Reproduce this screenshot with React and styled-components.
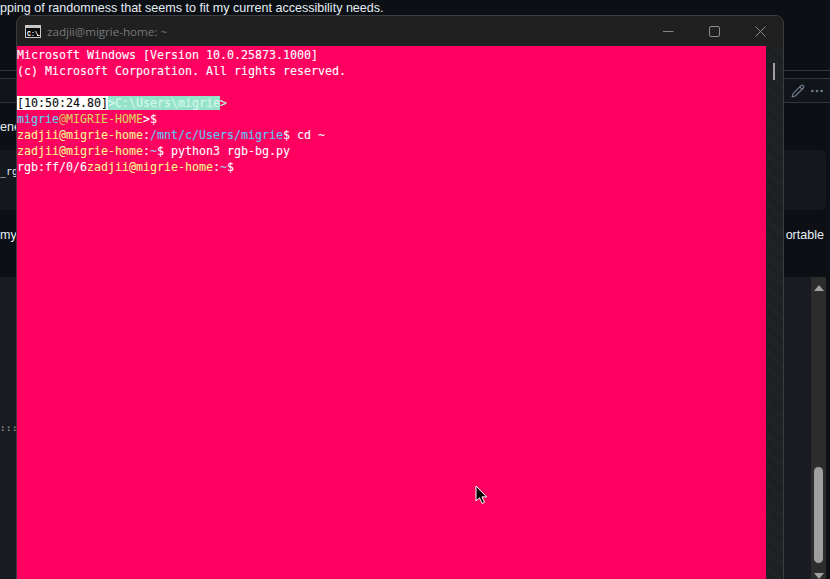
import React from "react";
import styled, { createGlobalStyle } from "styled-components";
import { Pencil, Ellipsis } from "lucide-react";

const Global = createGlobalStyle`
  html, body { margin: 0; padding: 0; background: #0c1015; }
`;

const App = () => {
  return (
    <>
      <Global />
      <Page>
        <IntroLine>pping of randomness that seems to fit my current accessibility needs.</IntroLine>
        <FileHeader>
          <Toolbar>
            <Pencil size={14} />
            <Ellipsis size={16} />
          </Toolbar>
        </FileHeader>
        <ParaLine>ene</ParaLine>
        <SnippetBlock>
          <SnippetText>_rg</SnippetText>
        </SnippetBlock>
        <ParaLine2>
          <span>my</span>
          <span>ortable</span>
        </ParaLine2>
        <CodeBlock>
          <CodeArea>
            <Dots>:::</Dots>
          </CodeArea>
          <CodeScroll>
            <Arrow />
            <ThumbTrack>
              <CodeThumb />
            </ThumbTrack>
            <Arrow $down />
          </CodeScroll>
        </CodeBlock>

        <TermWindow>
          <TitleBar>
            <ConsoleIcon width="16" height="13" viewBox="0 0 16 13">
              <rect x="0.5" y="0.5" width="15" height="12" fill="#0c0c0c" stroke="#c8c8c8" />
              <rect x="1" y="1" width="14" height="2" fill="#c8c8c8" />
              <text x="2" y="10.500" fontSize="6.500" fontWeight="700" fontFamily="Liberation Mono, monospace" fill="#fff">
                C:\
              </text>
              <path d="M12 10.500h2.500" stroke="#fff" fill="none" />
            </ConsoleIcon>
            <WindowTitle>zadjii@migrie-home: ~</WindowTitle>
            <Controls>
              <ControlBtn>
                <svg width="11" height="11" viewBox="0 0 11 11">
                  <path d="M0 5.500h10.500" stroke="#8a8488" fill="none" />
                </svg>
              </ControlBtn>
              <ControlBtn>
                <svg width="11" height="11" viewBox="0 0 11 11">
                  <rect x="0.5" y="0.5" width="10" height="10" rx="1.500" stroke="#8a8a8a" fill="none" />
                </svg>
              </ControlBtn>
              <ControlBtn>
                <svg width="11" height="11" viewBox="0 0 11 11">
                  <path d="M0.500 0.500l10 10M10.500 0.500l-10 10" stroke="#8a8a8a" fill="none" />
                </svg>
              </ControlBtn>
            </Controls>
          </TitleBar>
          <TermBody>
            <Screen>
              <Line>Microsoft Windows [Version 10.0.25873.1000]</Line>
              <Line>(c) Microsoft Corporation. All rights reserved.</Line>
              <Line>&nbsp;</Line>
              <Line>
                <TimeChip>[10:50:24.80]</TimeChip>
                <PathChip>&gt;C:\Users\migrie</PathChip>
                <Seg $c="#b4f2de">&gt;</Seg>
              </Line>
              <Line>
                <Seg $c="#5ad0f0">migrie</Seg>
                <Seg $c="#e8b050">@</Seg>
                <Seg $c="#dcd35c">MIGRIE-HOME</Seg>
                &gt;$
              </Line>
              <Line>
                <Seg $c="#f8f68a">zadjii@migrie-home</Seg>:
                <Seg $c="#5cc8f5">/mnt/c/Users/migrie</Seg>$ cd ~
              </Line>
              <Line>
                <Seg $c="#f8f68a">zadjii@migrie-home</Seg>:
                <Seg $c="#8fd8f0">~</Seg>$ python3 rgb-bg.py
              </Line>
              <Line>
                rgb:ff/0/6<Seg $c="#f8f68a">zadjii@migrie-home</Seg>:
                <Seg $c="#8fd8f0">~</Seg>$
              </Line>
            </Screen>
            <TermScroll>
              <TermThumb />
            </TermScroll>
          </TermBody>
        </TermWindow>

        <Cursor width="13" height="20" viewBox="0 0 13 20">
          <path
            d="M1 1v15l3.500-3.200 2.600 5.700 2.400-1.100-2.600-5.500h4.800z"
            fill="#000"
            stroke="#fff"
            strokeWidth="1"
          />
        </Cursor>
      </Page>
    </>
  );
};
export default App;

const Page = styled.div`
  position: relative;
  width: 830px;
  height: 579px;
  overflow: hidden;
  display: flex;
  flex-direction: column;
  background: #0c1015;
  color: #e6edf3;
  font-family: "Liberation Sans", Arial, sans-serif;
  font-size: 12.55px;
`;
const IntroLine = styled.div`
  height: 16px;
  line-height: 16px;
  white-space: nowrap;
`;
const FileHeader = styled.div`
  margin-top: 54px;
  border-top: 1px solid #30363d;
  padding-top: 7px;
`;
const Toolbar = styled.div`
  height: 23px;
  border-top: 1px solid #30363d;
  border-bottom: 1px solid #30363d;
  background: #11151a;
  display: flex;
  align-items: center;
  justify-content: flex-end;
  gap: 4px;
  padding-right: 5px;
  color: #6e7b8a;
`;
const ParaLine = styled.div`
  margin-top: 15px;
  height: 18px;
  line-height: 18px;
`;
const SnippetBlock = styled.div`
  margin: 14px 4px 0 0;
  height: 60px;
  padding-top: 16px;
  box-sizing: border-box;
  background: #15191e;
  border-radius: 0 6px 6px 0;
`;
const SnippetText = styled.div`
  font-family: "DejaVu Sans Mono", monospace;
  font-size: 10px;
  line-height: 12px;
`;
const ParaLine2 = styled.div`
  margin: 16px 6px 0 0;
  height: 18px;
  line-height: 18px;
  display: flex;
  justify-content: space-between;
`;
const CodeBlock = styled.div`
  margin: 33px 4px 0 0;
  flex: 1;
  min-height: 0;
  display: flex;
  background: #181b20;
`;
const CodeArea = styled.div`
  flex: 1;
  padding-top: 145px;
`;
const Dots = styled.div`
  font-family: "DejaVu Sans Mono", monospace;
  font-size: 9px;
  font-weight: 700;
  letter-spacing: 0.6px;
  line-height: 12px;
  color: #8b949e;
`;
const CodeScroll = styled.div`
  width: 15px;
  background: #2c2c2c;
  display: flex;
  flex-direction: column;
  align-items: center;
  padding-top: 8px;
`;
const Arrow = styled.div`
  width: 0;
  height: 0;
  flex: none;
  border-left: 5px solid transparent;
  border-right: 5px solid transparent;
  border-${(p) => (p.$down ? "top" : "bottom")}: 6px solid #9f9f9f;
`;
const ThumbTrack = styled.div`
  flex: 1;
  width: 100%;
  display: flex;
  flex-direction: column;
  justify-content: flex-end;
  align-items: center;
  padding-bottom: 10px;
`;
const CodeThumb = styled.div`
  width: 9px;
  height: 96px;
  border-radius: 5px;
  background: #9f9f9f;
`;
const TermWindow = styled.div`
  position: absolute;
  left: 16px;
  top: 15px;
  width: 768px;
  height: 580px;
  box-sizing: border-box;
  border: 1px solid #3b3d40;
  border-radius: 8px 8px 0 0;
  overflow: hidden;
  display: flex;
  flex-direction: column;
  background: #202020;
`;
const TitleBar = styled.div`
  height: 30px;
  flex: none;
  display: flex;
  align-items: center;
  padding-left: 8px;
  background: #202020;
`;
const ConsoleIcon = styled.svg`
  flex: none;
`;
const WindowTitle = styled.span`
  margin-left: 6px;
  font-family: "Open Sans", sans-serif;
  font-size: 11.6px;
  color: #77787a;
`;
const Controls = styled.div`
  margin-left: auto;
  display: flex;
`;
const ControlBtn = styled.div`
  width: 46px;
  height: 30px;
  display: flex;
  align-items: center;
  justify-content: center;
`;
const TermBody = styled.div`
  flex: 1;
  display: flex;
  min-height: 0;
`;
const Screen = styled.div`
  flex: 1;
  background: #ff0060;
  color: #fff;
  font-family: "DejaVu Sans Mono", monospace;
  font-size: 11.63px;
  line-height: 16px;
  padding-top: 1px;
  white-space: pre;
  -webkit-text-stroke: 0.1px currentColor;
`;
const Line = styled.div`
  height: 16px;
`;
const TimeChip = styled.span`
  background: #fff;
  color: #0c0c0c;
`;
const PathChip = styled.span`
  background: #95e3c9;
  color: #d8f8ee;
`;
const Seg = styled.span`
  color: ${(p) => p.$c};
`;
const TermScroll = styled.div`
  width: 17px;
  flex: none;
  padding: 17px 0 0 7px;
  box-sizing: border-box;
  background: repeating-linear-gradient(45deg, #1b1d20 0 1px, #222427 1px 2px);
`;
const TermThumb = styled.div`
  width: 2px;
  height: 17px;
  background: #a0a0a0;
`;
const Cursor = styled.svg`
  position: absolute;
  left: 475px;
  top: 485px;
`;
